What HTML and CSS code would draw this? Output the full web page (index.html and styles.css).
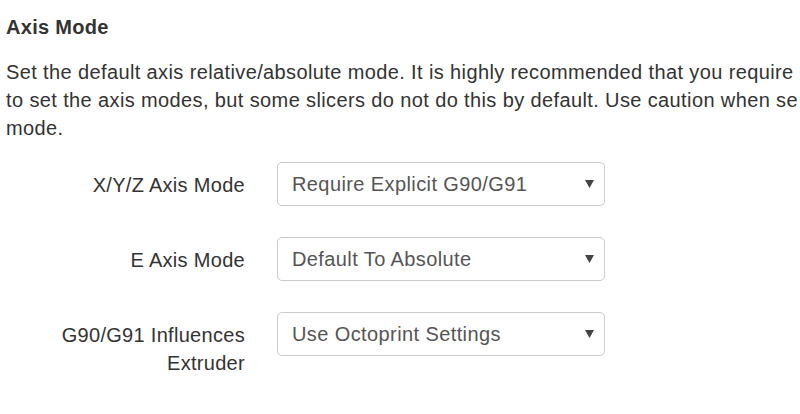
FILE: index.html
```html
<!DOCTYPE html>
<html lang="en">
<head>
    <meta charset="UTF-8">
    <meta name="viewport" content="width=device-width, initial-scale=1.0">
    <title>Axis Mode</title>
    <link rel="stylesheet" href="styles.css">
</head>
<body>
    <div class="settings">
        <h4 class="section-title">Axis Mode</h4>
        <p class="help">Set the default axis relative/absolute mode. It is highly recommended that you require<br>to set the axis modes, but some slicers do not do this by default. Use caution when se<br>mode.</p>

        <form class="form-horizontal">
            <div class="control-group">
                <label class="control-label" for="xyz_mode">X/Y/Z Axis Mode</label>
                <div class="select-wrap">
                    <select id="xyz_mode" class="select">
                        <option>Require Explicit G90/G91</option>
                        <option>Default To Absolute</option>
                        <option>Default To Relative</option>
                    </select>
                    <svg class="caret" width="9" height="8" viewBox="0 0 9 8"><path d="M0 0H9L4.5 8Z"/></svg>
                </div>
            </div>

            <div class="control-group">
                <label class="control-label" for="e_mode">E Axis Mode</label>
                <div class="select-wrap">
                    <select id="e_mode" class="select">
                        <option>Default To Absolute</option>
                        <option>Default To Relative</option>
                        <option>Require Explicit M82/M83</option>
                    </select>
                    <svg class="caret" width="9" height="8" viewBox="0 0 9 8"><path d="M0 0H9L4.5 8Z"/></svg>
                </div>
            </div>

            <div class="control-group">
                <label class="control-label" for="g90_extruder">G90/G91 Influences Extruder</label>
                <div class="select-wrap">
                    <select id="g90_extruder" class="select">
                        <option>Use Octoprint Settings</option>
                        <option>True</option>
                        <option>False</option>
                    </select>
                    <svg class="caret" width="9" height="8" viewBox="0 0 9 8"><path d="M0 0H9L4.5 8Z"/></svg>
                </div>
            </div>
        </form>
    </div>
</body>
</html>
```

FILE: styles.css
```css
body {
    margin: 0;
    font-family: "Liberation Sans", Arial, sans-serif;
    font-size: 20px;
    line-height: 28px;
    letter-spacing: 0.3px;
    color: #333;
    background-color: #fff;
    overflow: hidden;
}

.settings {
    padding: 13px 0 0 6px;
}

.section-title {
    margin: 0 0 17px 0;
    font-size: 20px;
    font-weight: bold;
    line-height: 28px;
}

.help {
    margin: 0 0 20px 0;
    white-space: nowrap;
    letter-spacing: 0.38px;
}

.form-horizontal {
    margin: 0;
}

.control-group {
    display: flex;
    align-items: flex-start;
    margin-bottom: 31px;
}

.control-label {
    width: 239px;
    padding-top: 9px;
    margin-right: 32px;
    text-align: right;
    flex-shrink: 0;
}

.select-wrap {
    position: relative;
    width: 328px;
    height: 44px;
}

.select {
    -webkit-appearance: none;
    appearance: none;
    width: 100%;
    height: 44px;
    box-sizing: border-box;
    padding: 0 30px 0 14px;
    border: 1px solid #ccc;
    border-radius: 5px;
    background-color: #fff;
    color: #555;
    font: 20px/28px "Liberation Sans", Arial, sans-serif;
    letter-spacing: 0.4px;
    outline: none;
}

.caret {
    position: absolute;
    right: 11px;
    top: 18px;
    fill: #444;
    pointer-events: none;
}
```
